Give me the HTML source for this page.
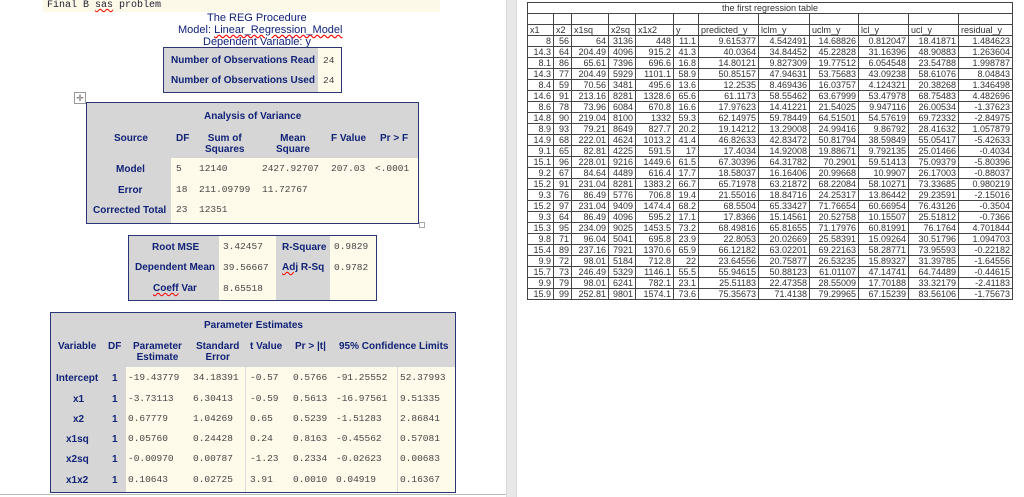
<!DOCTYPE html>
<html><head><meta charset="utf-8"><style>
*{margin:0;padding:0;box-sizing:border-box}
body{width:1024px;height:497px;background:#fff;position:relative;overflow:hidden;font-family:"Liberation Sans",Arial,sans-serif}
.a{position:absolute}
.n{color:#112277;font-weight:bold;font-size:10px;white-space:nowrap}
.t{color:#112277;font-size:11px;white-space:nowrap}
.m{font-family:"Liberation Mono",monospace;font-size:9.5px;color:#444;white-space:nowrap}
.box{position:absolute;border:1.5px solid #2b3575;background:#d6d6d6}
.cr{position:absolute;background:#fffbea}
.c{text-align:center}
table.r{position:absolute;left:527px;top:2px;border-collapse:collapse;font-size:9px;color:#333;table-layout:fixed}
table.r td{border:1px solid #444;height:11px;line-height:9px;padding:0 2px;text-align:right;white-space:nowrap;overflow:hidden}
table.r tr.h td{text-align:left}
</style></head><body>
<div class="a" style="left:43px;top:0;width:397px;height:12px;background:#fdf9e8"></div>
<div class="a m" style="left:47px;top:0;font-size:10px;color:#223;">Final B <span style="text-decoration:underline wavy red">sas</span> problem</div>
<div class="a t" style="left:207px;top:12px;">The REG Procedure</div>
<div class="a t" style="left:178px;top:24px;">Model: <span style="text-decoration:underline wavy red">Linear_Regression_Model</span></div>
<div class="a t" style="left:203px;top:36px;">Dependent Variable: y</div>

<div class="box" style="left:163px;top:47px;width:179px;height:46px"></div>
<div class="cr" style="left:318px;top:48px;width:23px;height:44px"></div>
<div class="a n" style="left:171px;top:55px">Number of Observations Read</div>
<div class="a n" style="left:171px;top:75px">Number of Observations Used</div>
<div class="a m" style="left:323px;top:55px">24</div>
<div class="a m" style="left:323px;top:75px">24</div>

<div class="a" style="left:74px;top:92px;width:12px;height:12px;border:1px solid #999;font-size:9px;line-height:10px;text-align:center;color:#555">✛</div>

<div class="box" style="left:86px;top:102px;width:333px;height:122px"></div>
<div class="cr" style="left:171px;top:158px;width:247px;height:65px"></div>
<div class="a n" style="left:204px;top:111px">Analysis of Variance</div>
<div class="a n" style="left:114px;top:133px">Source</div>
<div class="a n" style="left:176px;top:133px">DF</div>
<div class="a n c" style="left:205px;top:133px;line-height:11px">Sum of<br>Squares</div>
<div class="a n c" style="left:276px;top:133px;line-height:11px">Mean<br>Square</div>
<div class="a n" style="left:331px;top:133px">F Value</div>
<div class="a n" style="left:380px;top:133px">Pr &gt; F</div>
<div class="a n" style="left:116px;top:164px">Model</div>
<div class="a n" style="left:118px;top:185px">Error</div>
<div class="a n" style="left:93px;top:205px">Corrected Total</div>
<div class="a m" style="left:176px;top:163px">5</div>
<div class="a m" style="left:199px;top:163px">12140</div>
<div class="a m" style="left:262px;top:163px">2427.92707</div>
<div class="a m" style="left:331px;top:163px">207.03</div>
<div class="a m" style="left:375px;top:163px">&lt;.0001</div>
<div class="a m" style="left:176px;top:184px">18</div>
<div class="a m" style="left:199px;top:184px">211.09799</div>
<div class="a m" style="left:262px;top:184px">11.72767</div>
<div class="a m" style="left:176px;top:204px">23</div>
<div class="a m" style="left:199px;top:204px">12351</div>
<div class="a" style="left:419px;top:222px;width:6px;height:6px;border:1px solid #aaa"></div>

<div class="box" style="left:128px;top:235px;width:249px;height:66px"></div>
<div class="cr" style="left:219px;top:236px;width:57px;height:64px"></div>
<div class="cr" style="left:330px;top:236px;width:46px;height:64px"></div>
<div class="a n" style="left:152px;top:242px">Root MSE</div>
<div class="a n" style="left:135px;top:262px">Dependent Mean</div>
<div class="a n" style="left:153px;top:283px"><span style="text-decoration:underline wavy red">Coeff</span> Var</div>
<div class="a n" style="left:282px;top:242px">R-Square</div>
<div class="a n" style="left:282px;top:262px"><span style="text-decoration:underline wavy red">Adj</span> R-Sq</div>
<div class="a m" style="left:223px;top:241px">3.42457</div>
<div class="a m" style="left:223px;top:262px">39.56667</div>
<div class="a m" style="left:223px;top:283px">8.65518</div>
<div class="a m" style="left:334px;top:241px">0.9829</div>
<div class="a m" style="left:334px;top:262px">0.9782</div>

<div class="box" style="left:50px;top:312px;width:406px;height:181px"></div>
<div class="cr" style="left:126px;top:367px;width:329px;height:125px"></div>
<div class="a" style="left:245px;top:367px;width:1px;height:125px;background:#ddd"></div>
<div class="a" style="left:397px;top:367px;width:1px;height:125px;background:#ddd"></div>
<div class="a n" style="left:204px;top:320px">Parameter Estimates</div>
<div class="a n" style="left:58px;top:341px">Variable</div>
<div class="a n" style="left:108px;top:341px">DF</div>
<div class="a n c" style="left:133px;top:341px;line-height:11px">Parameter<br>Estimate</div>
<div class="a n c" style="left:196px;top:341px;line-height:11px">Standard<br>Error</div>
<div class="a n" style="left:250px;top:341px">t Value</div>
<div class="a n" style="left:295px;top:341px">Pr &gt; |t|</div>
<div class="a n" style="left:339px;top:341px">95% Confidence Limits</div>
<div class="a n" style="left:56px;top:373px">Intercept</div>
<div class="a n" style="left:73px;top:394px">x1</div>
<div class="a n" style="left:73px;top:414px">x2</div>
<div class="a n" style="left:66px;top:434px">x1sq</div>
<div class="a n" style="left:66px;top:454px">x2sq</div>
<div class="a n" style="left:66px;top:475px">x1x2</div>
<div class="a n" style="left:112px;top:373px">1</div>
<div class="a n" style="left:112px;top:394px">1</div>
<div class="a n" style="left:112px;top:414px">1</div>
<div class="a n" style="left:112px;top:434px">1</div>
<div class="a n" style="left:112px;top:454px">1</div>
<div class="a n" style="left:112px;top:475px">1</div>
<div class="a m" style="left:128px;top:372px">-19.43779</div><div class="a m" style="left:193px;top:372px">34.18391</div><div class="a m" style="left:250px;top:372px">-0.57</div><div class="a m" style="left:293px;top:372px">0.5766</div><div class="a m" style="left:336px;top:372px">-91.25552</div><div class="a m" style="left:400px;top:372px">52.37993</div>
<div class="a m" style="left:128px;top:393px">-3.73113</div><div class="a m" style="left:193px;top:393px">6.30413</div><div class="a m" style="left:250px;top:393px">-0.59</div><div class="a m" style="left:293px;top:393px">0.5613</div><div class="a m" style="left:336px;top:393px">-16.97561</div><div class="a m" style="left:400px;top:393px">9.51335</div>
<div class="a m" style="left:128px;top:413px">0.67779</div><div class="a m" style="left:193px;top:413px">1.04269</div><div class="a m" style="left:250px;top:413px">0.65</div><div class="a m" style="left:293px;top:413px">0.5239</div><div class="a m" style="left:336px;top:413px">-1.51283</div><div class="a m" style="left:400px;top:413px">2.86841</div>
<div class="a m" style="left:128px;top:433px">0.05760</div><div class="a m" style="left:193px;top:433px">0.24428</div><div class="a m" style="left:250px;top:433px">0.24</div><div class="a m" style="left:293px;top:433px">0.8163</div><div class="a m" style="left:336px;top:433px">-0.45562</div><div class="a m" style="left:400px;top:433px">0.57081</div>
<div class="a m" style="left:128px;top:453px">-0.00970</div><div class="a m" style="left:193px;top:453px">0.00787</div><div class="a m" style="left:250px;top:453px">-1.23</div><div class="a m" style="left:293px;top:453px">0.2334</div><div class="a m" style="left:336px;top:453px">-0.02623</div><div class="a m" style="left:400px;top:453px">0.00683</div>
<div class="a m" style="left:128px;top:474px">0.10643</div><div class="a m" style="left:193px;top:474px">0.02725</div><div class="a m" style="left:250px;top:474px">3.91</div><div class="a m" style="left:293px;top:474px">0.0010</div><div class="a m" style="left:336px;top:474px">0.04919</div><div class="a m" style="left:400px;top:474px">0.16367</div>

<div class="a" style="left:0;top:494px;width:510px;height:1px;background:#bbb"></div>
<div class="a" style="left:506px;top:0;width:11px;height:497px;background:#e8e8e8;border-left:1px solid #d8d8d8;border-right:1px solid #d8d8d8"></div>

<table class="r">
<colgroup><col style="width:26px"><col style="width:18px"><col style="width:37px"><col style="width:27px"><col style="width:38px"><col style="width:25px"><col style="width:60px"><col style="width:51px"><col style="width:49px"><col style="width:50px"><col style="width:50px"><col style="width:54px"></colgroup>
<tr><td colspan="12" style="text-align:center">the first regression table</td></tr>
<tr><td></td><td></td><td></td><td></td><td></td><td></td><td></td><td></td><td></td><td></td><td></td><td></td></tr>
<tr class="h"><td>x1</td><td>x2</td><td>x1sq</td><td>x2sq</td><td>x1x2</td><td>y</td><td>predicted_y</td><td>lclm_y</td><td>uclm_y</td><td>lcl_y</td><td>ucl_y</td><td>residual_y</td></tr>
<tr><td>8</td><td>56</td><td>64</td><td>3136</td><td>448</td><td>11.1</td><td>9.615377</td><td>4.542491</td><td>14.68826</td><td>0.812047</td><td>18.41871</td><td>1.484623</td></tr>
<tr><td>14.3</td><td>64</td><td>204.49</td><td>4096</td><td>915.2</td><td>41.3</td><td>40.0364</td><td>34.84452</td><td>45.22828</td><td>31.16396</td><td>48.90883</td><td>1.263604</td></tr>
<tr><td>8.1</td><td>86</td><td>65.61</td><td>7396</td><td>696.6</td><td>16.8</td><td>14.80121</td><td>9.827309</td><td>19.77512</td><td>6.054548</td><td>23.54788</td><td>1.998787</td></tr>
<tr><td>14.3</td><td>77</td><td>204.49</td><td>5929</td><td>1101.1</td><td>58.9</td><td>50.85157</td><td>47.94631</td><td>53.75683</td><td>43.09238</td><td>58.61076</td><td>8.04843</td></tr>
<tr><td>8.4</td><td>59</td><td>70.56</td><td>3481</td><td>495.6</td><td>13.6</td><td>12.2535</td><td>8.469436</td><td>16.03757</td><td>4.124321</td><td>20.38268</td><td>1.346498</td></tr>
<tr><td>14.6</td><td>91</td><td>213.16</td><td>8281</td><td>1328.6</td><td>65.6</td><td>61.1173</td><td>58.55462</td><td>63.67999</td><td>53.47978</td><td>68.75483</td><td>4.482696</td></tr>
<tr><td>8.6</td><td>78</td><td>73.96</td><td>6084</td><td>670.8</td><td>16.6</td><td>17.97623</td><td>14.41221</td><td>21.54025</td><td>9.947116</td><td>26.00534</td><td>-1.37623</td></tr>
<tr><td>14.8</td><td>90</td><td>219.04</td><td>8100</td><td>1332</td><td>59.3</td><td>62.14975</td><td>59.78449</td><td>64.51501</td><td>54.57619</td><td>69.72332</td><td>-2.84975</td></tr>
<tr><td>8.9</td><td>93</td><td>79.21</td><td>8649</td><td>827.7</td><td>20.2</td><td>19.14212</td><td>13.29008</td><td>24.99416</td><td>9.86792</td><td>28.41632</td><td>1.057879</td></tr>
<tr><td>14.9</td><td>68</td><td>222.01</td><td>4624</td><td>1013.2</td><td>41.4</td><td>46.82633</td><td>42.83472</td><td>50.81794</td><td>38.59849</td><td>55.05417</td><td>-5.42633</td></tr>
<tr><td>9.1</td><td>65</td><td>82.81</td><td>4225</td><td>591.5</td><td>17</td><td>17.4034</td><td>14.92008</td><td>19.88671</td><td>9.792135</td><td>25.01466</td><td>-0.4034</td></tr>
<tr><td>15.1</td><td>96</td><td>228.01</td><td>9216</td><td>1449.6</td><td>61.5</td><td>67.30396</td><td>64.31782</td><td>70.2901</td><td>59.51413</td><td>75.09379</td><td>-5.80396</td></tr>
<tr><td>9.2</td><td>67</td><td>84.64</td><td>4489</td><td>616.4</td><td>17.7</td><td>18.58037</td><td>16.16406</td><td>20.99668</td><td>10.9907</td><td>26.17003</td><td>-0.88037</td></tr>
<tr><td>15.2</td><td>91</td><td>231.04</td><td>8281</td><td>1383.2</td><td>66.7</td><td>65.71978</td><td>63.21872</td><td>68.22084</td><td>58.10271</td><td>73.33685</td><td>0.980219</td></tr>
<tr><td>9.3</td><td>76</td><td>86.49</td><td>5776</td><td>706.8</td><td>19.4</td><td>21.55016</td><td>18.84716</td><td>24.25317</td><td>13.86442</td><td>29.23591</td><td>-2.15016</td></tr>
<tr><td>15.2</td><td>97</td><td>231.04</td><td>9409</td><td>1474.4</td><td>68.2</td><td>68.5504</td><td>65.33427</td><td>71.76654</td><td>60.66954</td><td>76.43126</td><td>-0.3504</td></tr>
<tr><td>9.3</td><td>64</td><td>86.49</td><td>4096</td><td>595.2</td><td>17.1</td><td>17.8366</td><td>15.14561</td><td>20.52758</td><td>10.15507</td><td>25.51812</td><td>-0.7366</td></tr>
<tr><td>15.3</td><td>95</td><td>234.09</td><td>9025</td><td>1453.5</td><td>73.2</td><td>68.49816</td><td>65.81655</td><td>71.17976</td><td>60.81991</td><td>76.1764</td><td>4.701844</td></tr>
<tr><td>9.8</td><td>71</td><td>96.04</td><td>5041</td><td>695.8</td><td>23.9</td><td>22.8053</td><td>20.02669</td><td>25.58391</td><td>15.09264</td><td>30.51796</td><td>1.094703</td></tr>
<tr><td>15.4</td><td>89</td><td>237.16</td><td>7921</td><td>1370.6</td><td>65.9</td><td>66.12182</td><td>63.02201</td><td>69.22163</td><td>58.28771</td><td>73.95593</td><td>-0.22182</td></tr>
<tr><td>9.9</td><td>72</td><td>98.01</td><td>5184</td><td>712.8</td><td>22</td><td>23.64556</td><td>20.75877</td><td>26.53235</td><td>15.89327</td><td>31.39785</td><td>-1.64556</td></tr>
<tr><td>15.7</td><td>73</td><td>246.49</td><td>5329</td><td>1146.1</td><td>55.5</td><td>55.94615</td><td>50.88123</td><td>61.01107</td><td>47.14741</td><td>64.74489</td><td>-0.44615</td></tr>
<tr><td>9.9</td><td>79</td><td>98.01</td><td>6241</td><td>782.1</td><td>23.1</td><td>25.51183</td><td>22.47358</td><td>28.55009</td><td>17.70188</td><td>33.32179</td><td>-2.41183</td></tr>
<tr><td>15.9</td><td>99</td><td>252.81</td><td>9801</td><td>1574.1</td><td>73.6</td><td>75.35673</td><td>71.4138</td><td>79.29965</td><td>67.15239</td><td>83.56106</td><td>-1.75673</td></tr>
</table>
</body></html>
